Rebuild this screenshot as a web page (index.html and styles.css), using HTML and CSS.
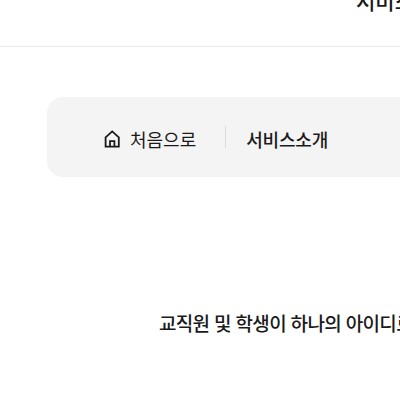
FILE: index.html
```html
<!DOCTYPE html>
<html lang="ko">
<head>
    <meta charset="UTF-8">
    <meta name="viewport" content="width=device-width, initial-scale=1.0">
    <title>서비스소개</title>
    <link rel="stylesheet" href="styles.css">
</head>
<body>
    <header class="top-bar">
        <div class="page-title">서비스소개</div>
    </header>
    <nav class="breadcrumb">
        <a class="crumb crumb-home" href="#">
            <svg class="home-icon" width="18" height="18" viewBox="0 0 18 18" fill="none" stroke="#1a1a1a" stroke-width="1.8" stroke-linejoin="miter">
                <path d="M2.6 7.4 9.2 1.4l6.6 6v9.2H2.6z"/>
                <path d="M7 16.6v-5.4h4.4v5.4"/>
            </svg>
            <span>처음으로</span>
        </a>
        <span class="crumb-divider"></span>
        <a class="crumb crumb-current" href="#">서비스소개</a>
    </nav>
    <p class="intro">교직원 및 학생이 하나의 아이디로 모든 서비스를 이용할 수 있습니다.</p>
</body>
</html>
```

FILE: styles.css
```css
html, body {
    margin: 0;
    height: 400px;
    overflow: hidden;
}
body {
    background: #fff;
    color: #1a1a1a;
    font-family: "Noto Sans CJK KR", "Noto Sans", sans-serif;
}
.top-bar {
    height: 46px;
    border-bottom: 1px solid #e8e8e8;
    overflow: hidden;
}
.page-title {
    margin: -15px 0 0 356px;
    font-size: 21px;
    line-height: 30px;
    font-weight: 500;
    white-space: nowrap;
}
.breadcrumb {
    display: flex;
    align-items: center;
    width: 600px;
    height: 80px;
    margin: 50px 0 0 47px;
    padding: 4px 0 0 56px;
    box-sizing: border-box;
    background: #f4f4f4;
    border-radius: 16px;
}
.crumb {
    display: flex;
    align-items: center;
    color: #1a1a1a;
    font-size: 18px;
    text-decoration: none;
    white-space: nowrap;
}
.home-icon {
    margin-right: 9px;
}
.crumb-divider {
    width: 1px;
    height: 22px;
    margin: -4px 20px 0 29px;
    background: #dcdcdc;
}
.crumb-current {
    font-weight: 500;
    letter-spacing: -0.2px;
}
.intro {
    margin: 133px 0 0 159px;
    font-size: 19px;
    line-height: 26px;
    font-weight: 500;
    letter-spacing: -0.67px;
    white-space: nowrap;
}
```
